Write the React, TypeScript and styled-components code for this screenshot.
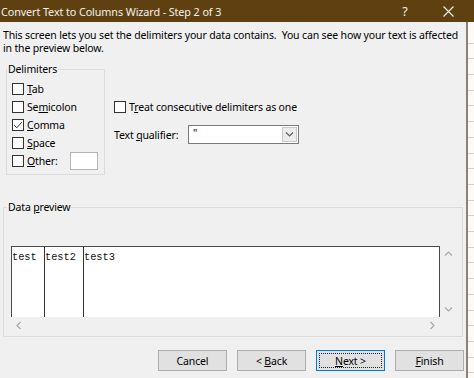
import React from "react";
import styled, { createGlobalStyle } from "styled-components";

const Global = createGlobalStyle`
  html, body { margin: 0; padding: 0; }
  body {
    width: 474px; height: 378px; overflow: hidden; background: #f0f0f0;
    font-family: "Noto Sans", "Open Sans", sans-serif;
  }
`;

const Window = styled.div`
  width: 474px; height: 378px; display: flex; flex-direction: column; overflow: hidden;
`;

const TitleBar = styled.div`
  height: 22px; flex: none; background: #5f4111; color: #f4f0ea;
  display: flex; align-items: center; padding-left: 1px; padding-right: 6px;
  font-family: "Noto Sans", sans-serif; font-size: 10.8px; letter-spacing: -0.1px; box-sizing: border-box;
`;
const Title = styled.div` flex: 1; white-space: nowrap; `;
const TitleButton = styled.div<{ $w: number }>`
  width: ${(p) => p.$w}px; height: 22px; display: flex; align-items: center; justify-content: center;
  font-size: 12.5px;
`;

const Main = styled.div` flex: 1; display: flex; min-height: 0; `;

const Dialog = styled.div`
  width: 466px; flex: none; background: #f0f0f0; display: flex; flex-direction: column;
  font-size: 10.5px; letter-spacing: -0.15px; color: #000;
`;

const GridStrip = styled.div`
  flex: 1; border-left: 2px solid #8c8272;
  background-color: #fbfaf6;
  background-image: repeating-linear-gradient(to bottom, transparent 0, transparent 14.7px, #d4d0c8 14.7px, #d4d0c8 15.7px);
  background-position: 0 6px;
`;

const Description = styled.div`
  padding: 7px 0 0 3px; line-height: 13px; white-space: nowrap;
`;

const Upper = styled.div` display: flex; align-items: flex-start; margin-top: 7px; padding-left: 6px; `;

const GroupBox = styled.fieldset<{ $w: number }>`
  margin: 0; padding: 0; min-width: 0; width: ${(p) => p.$w}px; box-sizing: border-box;
  border: 1px solid #dcdcdc;
`;
const GroupLegend = styled.legend<{ $m: number }>`
  padding: 0 1px; margin-left: ${(p) => p.$m}px; line-height: 14px;
`;

const DelimList = styled.div` display: flex; flex-direction: column; padding: 4px 6px 4px 5px; `;

const CheckRow = styled.label<{ $h?: number }>`
  display: flex; align-items: center; height: ${(p) => p.$h ?? 18}px; gap: 3px; white-space: nowrap;
`;

const Box = styled.span`
  width: 12px; height: 12px; box-sizing: border-box; border: 1px solid #333; background: #fff;
  display: flex; align-items: center; justify-content: center; flex: none;
`;

const Key = styled.span` text-decoration: underline; text-underline-offset: 1px; `;

const OtherInput = styled.div`
  margin-left: auto; width: 28px; height: 18px; box-sizing: border-box; border: 1px solid #b4b4b4; background: #fff;
`;

const Options = styled.div` display: flex; flex-direction: column; margin-left: 9px; margin-top: 38px; `;

const QualifierRow = styled.div` display: flex; align-items: center; margin-top: 11px; `;
const QualifierLabel = styled.span` width: 74px; white-space: nowrap; `;
const Select = styled.div`
  width: 111px; height: 19px; box-sizing: border-box; border: 1px solid #7a7a7a; background: #fff;
  display: flex; align-items: stretch;
`;
const SelectValue = styled.span` flex: 1; padding-left: 4px; line-height: 15px; `;
const DropButton = styled.span`
  width: 15px; margin: 1px; box-sizing: border-box; border: 1px solid #c9c9c9; background: #ececec;
  display: flex; align-items: center; justify-content: center;
`;

const PreviewGroup = styled(GroupBox)` margin: 25px 0 0 3px; `;

const PreviewContent = styled.div` padding: 32px 6px 3px 7px; `;

const PreviewGrid = styled.div`
  display: grid; grid-template-columns: 429px 16px; grid-template-rows: 71px 16px;
`;

const PreviewBox = styled.div`
  border: 1px solid #4a4a4a; border-bottom: none; background: #fff; display: flex; overflow: hidden;
`;

const PreviewCol = styled.div<{ $w?: number; $last?: boolean }>`
  ${(p) => (p.$w ? `width: ${p.$w}px; flex: none;` : "flex: 1;")}
  border-right: ${(p) => (p.$last ? "none" : "1px solid #333")};
  font-family: "Liberation Mono", "DejaVu Sans Mono", monospace; font-size: 10.3px; line-height: 12px;
  letter-spacing: 0; padding-top: 4px; color: #111; white-space: pre;
`;

const VScroll = styled.div` display: flex; flex-direction: column; justify-content: space-between; `;
const HScroll = styled.div` display: flex; justify-content: space-between; `;
const ArrowCell = styled.div`
  width: 16px; height: 16px; display: flex; align-items: center; justify-content: center;
`;

const ButtonRow = styled.div`
  display: flex; justify-content: flex-end; gap: 10px; margin-top: 13px; padding-right: 2px;
`;
const Button = styled.div<{ $focused?: boolean }>`
  position: relative; width: 69px; height: 21px; box-sizing: border-box;
  border: 1px solid ${(p) => (p.$focused ? "#0078d7" : "#adadad")};
  background: #e1e1e1; display: flex; align-items: center; justify-content: center;
  line-height: 14px; white-space: pre;
  ${(p) =>
    p.$focused
      ? `&::after { content: ""; position: absolute; inset: 2px; border: 1px dotted #222; }`
      : ""}
`;

const Check = () => (
  <svg width="10" height="10" viewBox="0 0 10 10">
    <path d="M1.2 5.2 L3.8 7.8 L8.8 2.2" fill="none" stroke="#333" strokeWidth="1" />
  </svg>
);

const Chevron = ({ dir, color = "#a8a8a8" }: { dir: "up" | "down" | "left" | "right"; color?: string }) => {
  const d = {
    up: "M1 5.5 L4.5 2 L8 5.5",
    down: "M1 2.5 L4.5 6 L8 2.5",
    left: "M5.5 1 L2 4.5 L5.5 8",
    right: "M2.5 1 L6 4.5 L2.5 8",
  }[dir];
  return (
    <svg width="9" height="9" viewBox="0 0 9 9">
      <path d={d} fill="none" stroke={color} strokeWidth="1.2" />
    </svg>
  );
};

const CloseIcon = () => (
  <svg width="11" height="11" viewBox="0 0 11 11">
    <path d="M0.5 0.5 L10.5 10.5 M10.5 0.5 L0.5 10.5" stroke="#f4f0ea" strokeWidth="1.1" />
  </svg>
);

type Delim = { pre: string; key: string; post: string; checked?: boolean; other?: boolean };
const delims: Delim[] = [
  { pre: "", key: "T", post: "ab" },
  { pre: "Se", key: "m", post: "icolon" },
  { pre: "", key: "C", post: "omma", checked: true },
  { pre: "", key: "S", post: "pace" },
  { pre: "", key: "O", post: "ther:", other: true },
];

const columns = [
  { text: "test", w: 32 },
  { text: "test2", w: 38 },
  { text: "test3" },
];

export default function App() {
  return (
    <Window>
      <Global />
      <TitleBar>
        <Title>Convert Text to Columns Wizard - Step 2 of 3</Title>
        <TitleButton $w={46}>?</TitleButton>
        <TitleButton $w={40}>
          <CloseIcon />
        </TitleButton>
      </TitleBar>
      <Main>
        <Dialog>
          <Description>
            {"This screen lets you set the delimiters your data contains.\u00a0 You can see how your text is affected"}
            <br />
            in the preview below.
          </Description>
          <Upper>
            <GroupBox $w={99}>
              <GroupLegend $m={0}>Delimiters</GroupLegend>
              <DelimList>
                {delims.map((d) => (
                  <CheckRow key={d.post}>
                    <Box>{d.checked && <Check />}</Box>
                    <span>
                      {d.pre}
                      <Key>{d.key}</Key>
                      {d.post}
                    </span>
                    {d.other && <OtherInput />}
                  </CheckRow>
                ))}
              </DelimList>
            </GroupBox>
            <Options>
              <CheckRow $h={14}>
                <Box />
                <span>
                  T<Key>r</Key>eat consecutive delimiters as one
                </span>
              </CheckRow>
              <QualifierRow>
                <QualifierLabel>
                  {"Text "}
                  <Key>q</Key>ualifier:
                </QualifierLabel>
                <Select>
                  <SelectValue>"</SelectValue>
                  <DropButton>
                    <Chevron dir="down" color="#606060" />
                  </DropButton>
                </Select>
              </QualifierRow>
            </Options>
          </Upper>
          <PreviewGroup $w={460}>
            <GroupLegend $m={3}>
              {"Data "}
              <Key>p</Key>review
            </GroupLegend>
            <PreviewContent>
              <PreviewGrid>
                <PreviewBox>
                  {columns.map((c, i) => (
                    <PreviewCol key={c.text} $w={c.w} $last={i === columns.length - 1}>
                      {c.text}
                    </PreviewCol>
                  ))}
                </PreviewBox>
                <VScroll>
                  <ArrowCell>
                    <Chevron dir="up" />
                  </ArrowCell>
                  <ArrowCell>
                    <Chevron dir="down" />
                  </ArrowCell>
                </VScroll>
                <HScroll>
                  <ArrowCell>
                    <Chevron dir="left" />
                  </ArrowCell>
                  <ArrowCell>
                    <Chevron dir="right" />
                  </ArrowCell>
                </HScroll>
                <div />
              </PreviewGrid>
            </PreviewContent>
          </PreviewGroup>
          <ButtonRow>
            <Button>Cancel</Button>
            <Button>
              {"< "}
              <Key>B</Key>ack
            </Button>
            <Button $focused>
              <span>
                <Key>N</Key>
                {"ext >"}
              </span>
            </Button>
            <Button>
              <Key>F</Key>inish
            </Button>
          </ButtonRow>
        </Dialog>
        <GridStrip />
      </Main>
    </Window>
  );
}
